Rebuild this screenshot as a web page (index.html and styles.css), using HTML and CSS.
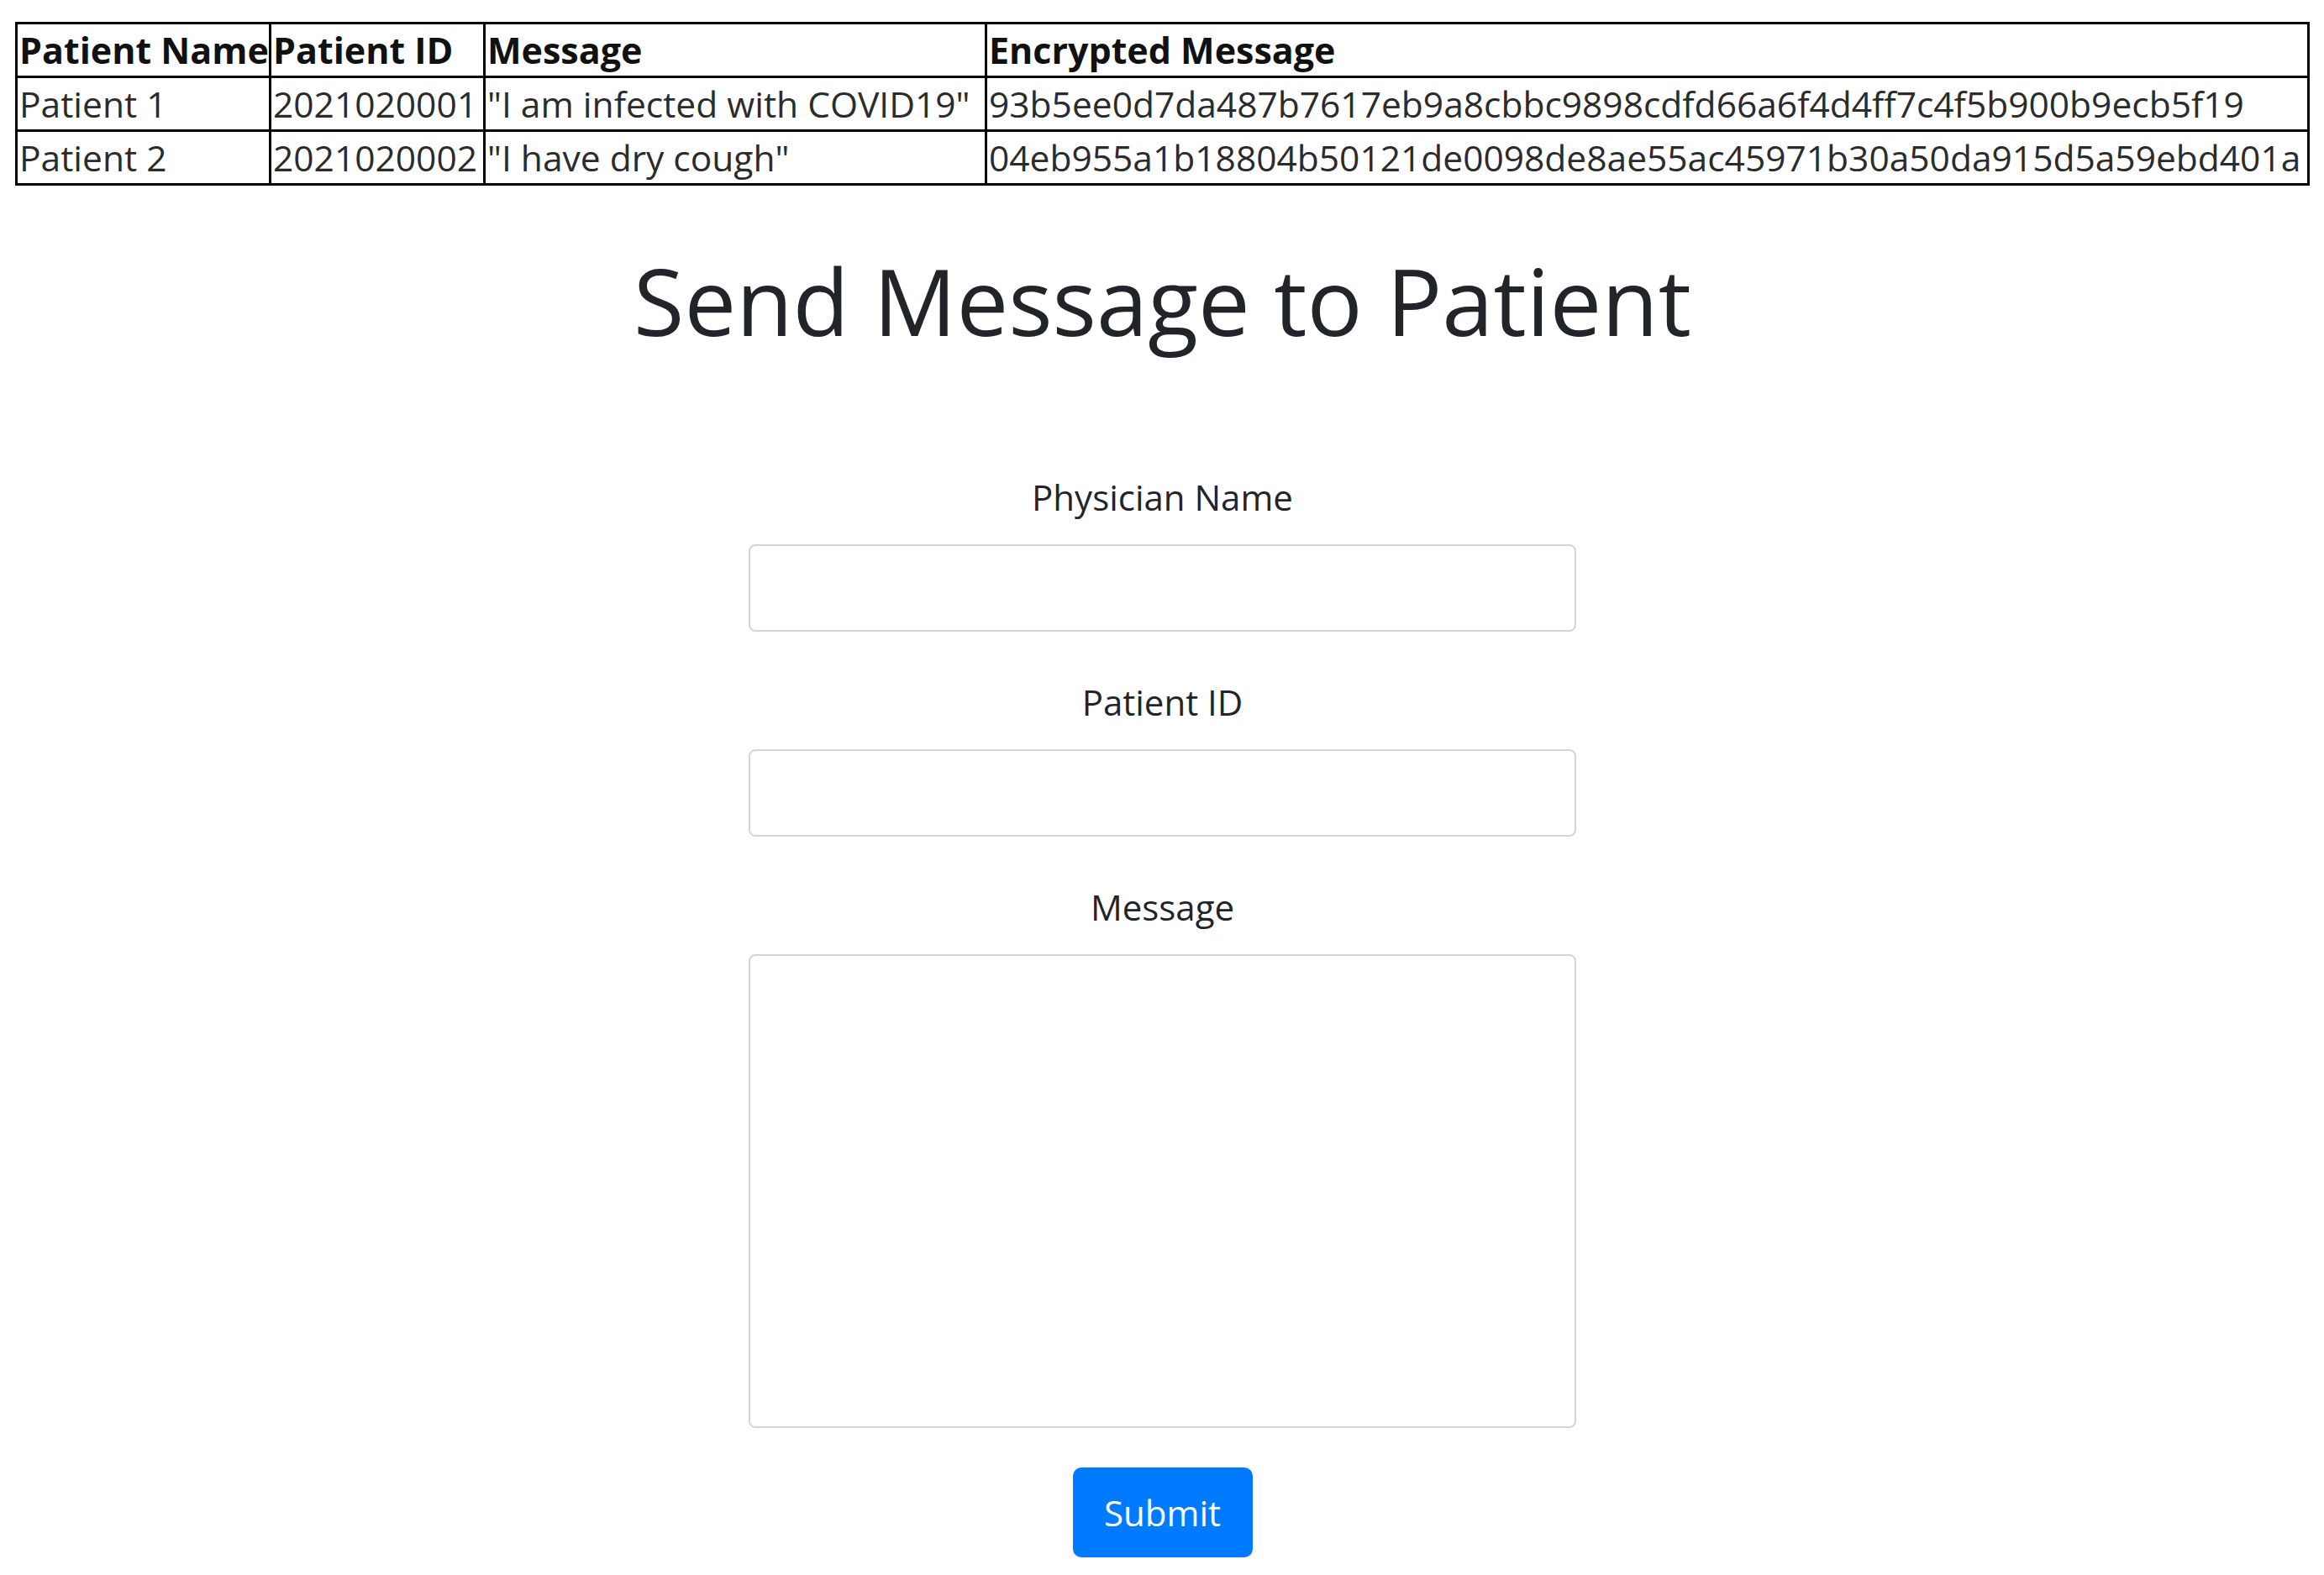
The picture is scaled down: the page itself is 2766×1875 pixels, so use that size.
FILE: index.html
```html
<!DOCTYPE html>
<html lang="en">
<head>
<meta charset="utf-8">
<title>Send Message to Patient</title>
<link rel="stylesheet" href="styles.css">
</head>
<body>
<div class="page">
  <table class="records">
    <colgroup>
      <col class="col-name">
      <col class="col-id">
      <col class="col-msg">
      <col class="col-enc">
    </colgroup>
    <thead>
      <tr><th>Patient Name</th><th>Patient ID</th><th>Message</th><th>Encrypted Message</th></tr>
    </thead>
    <tbody>
      <tr><td>Patient 1</td><td>2021020001</td><td>"I am infected with COVID19"</td><td>93b5ee0d7da487b7617eb9a8cbbc9898cdfd66a6f4d4ff7c4f5b900b9ecb5f19</td></tr>
      <tr><td>Patient 2</td><td>2021020002</td><td>"I have dry cough"</td><td>04eb955a1b18804b50121de0098de8ae55ac45971b30a50da915d5a59ebd401a</td></tr>
    </tbody>
  </table>

  <h1 class="title">Send Message to Patient</h1>

  <form class="msg-form">
    <div class="field">
      <label class="field-label" for="physician">Physician Name</label>
      <input class="field-input" id="physician" type="text">
    </div>
    <div class="field">
      <label class="field-label" for="patient">Patient ID</label>
      <input class="field-input" id="patient" type="text">
    </div>
    <div class="field">
      <label class="field-label" for="message">Message</label>
      <textarea class="field-input field-area" id="message"></textarea>
    </div>
    <div class="actions">
      <button class="btn-submit" type="button">Submit</button>
    </div>
  </form>
</div>
</body>
</html>
```
FILE: styles.css
```css
html, body {
  margin: 0;
  padding: 0;
  background: #ffffff;
}

body {
  font-family: "Open Sans", "Noto Sans", "Liberation Sans", sans-serif;
  color: #212529;
}

.page {
  padding: 26px 17px 0 18px;
}

.records {
  border-collapse: collapse;
  table-layout: fixed;
  width: 2731px;
  border: 3px solid #000;
  font-size: 43px;
}

.col-name { width: 302px; }
.col-id { width: 255px; }
.col-msg { width: 597px; }
.col-enc { width: auto; }

.records th,
.records td {
  border: 3px solid #000;
  padding: 0 1px 0 2px;
  line-height: 61px;
  text-align: left;
  white-space: nowrap;
  overflow: hidden;
}

.records th {
  font-weight: 700;
  color: #111;
}

.records td {
  font-size: 42.5px;
  font-weight: 400;
  color: #2b2b2b;
}

.title {
  margin: 70px 0 0;
  text-align: center;
  font-size: 110px;
  font-weight: 500;
  line-height: 1.2;
  color: #212529;
}

.msg-form {
  width: 985px;
  margin: 137px auto 0;
}

.field {
  margin-bottom: 52px;
}

.field-label {
  display: block;
  text-align: center;
  font-size: 42px;
  line-height: 63px;
  color: #212529;
  margin-bottom: 25px;
}

.field-input {
  display: block;
  box-sizing: border-box;
  width: 100%;
  height: 104px;
  margin: 0;
  border: 2px solid #d2d4d7;
  border-radius: 8px;
  background: #fff;
  font-family: inherit;
  font-size: 42px;
}

.field-area {
  height: 564px;
  resize: none;
}

.actions {
  display: flex;
  justify-content: center;
  margin-top: -5px;
}

.btn-submit {
  width: 214px;
  height: 107px;
  border: none;
  border-radius: 10px;
  background: #007bff;
  color: #fff;
  font-family: inherit;
  font-size: 42px;
  font-weight: 400;
  padding: 0;
}
```
